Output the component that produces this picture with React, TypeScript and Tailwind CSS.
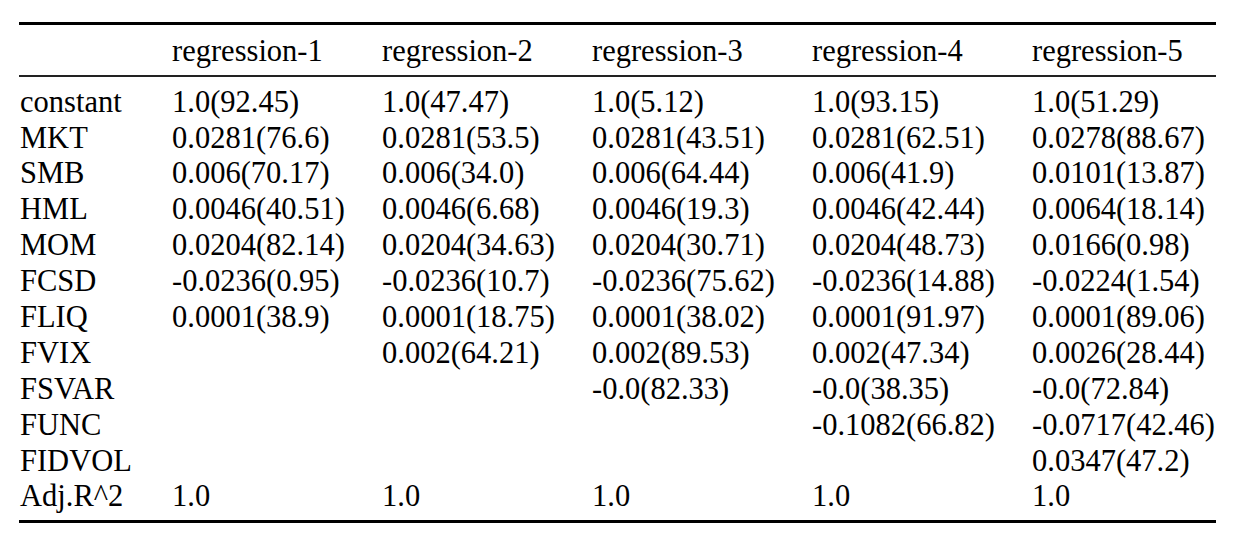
import React from 'react';

// regression results table (booktabs style)
const headers = ['regression-1', 'regression-2', 'regression-3', 'regression-4', 'regression-5'];

const rows: { name: string; cells: string[] }[] = [
  { name: 'constant', cells: ['1.0(92.45)', '1.0(47.47)', '1.0(5.12)', '1.0(93.15)', '1.0(51.29)'] },
  { name: 'MKT', cells: ['0.0281(76.6)', '0.0281(53.5)', '0.0281(43.51)', '0.0281(62.51)', '0.0278(88.67)'] },
  { name: 'SMB', cells: ['0.006(70.17)', '0.006(34.0)', '0.006(64.44)', '0.006(41.9)', '0.0101(13.87)'] },
  { name: 'HML', cells: ['0.0046(40.51)', '0.0046(6.68)', '0.0046(19.3)', '0.0046(42.44)', '0.0064(18.14)'] },
  { name: 'MOM', cells: ['0.0204(82.14)', '0.0204(34.63)', '0.0204(30.71)', '0.0204(48.73)', '0.0166(0.98)'] },
  { name: 'FCSD', cells: ['-0.0236(0.95)', '-0.0236(10.7)', '-0.0236(75.62)', '-0.0236(14.88)', '-0.0224(1.54)'] },
  { name: 'FLIQ', cells: ['0.0001(38.9)', '0.0001(18.75)', '0.0001(38.02)', '0.0001(91.97)', '0.0001(89.06)'] },
  { name: 'FVIX', cells: ['', '0.002(64.21)', '0.002(89.53)', '0.002(47.34)', '0.0026(28.44)'] },
  { name: 'FSVAR', cells: ['', '', '-0.0(82.33)', '-0.0(38.35)', '-0.0(72.84)'] },
  { name: 'FUNC', cells: ['', '', '', '-0.1082(66.82)', '-0.0717(42.46)'] },
  { name: 'FIDVOL', cells: ['', '', '', '', '0.0347(47.2)'] },
  { name: 'Adj.R^2', cells: ['1.0', '1.0', '1.0', '1.0', '1.0'] },
];

const cols = 'grid grid-cols-[152px_210px_210px_220px_220px_184px]';

export default function App() {
  return (
    <div className="w-[1244px] h-[543px] bg-white pt-[22px] pl-[19px] text-[30.5px] text-black [font-family:'Liberation_Serif','Times_New_Roman',serif]">
      <div className="w-[1197px]">
        <div className="h-[3px] bg-black" />
        <div className={`${cols} h-[50px] items-center pl-[1px]`}>
          <div />
          {headers.map((h) => (
            <div key={h} className="leading-none pt-[3px]">{h}</div>
          ))}
        </div>
        <div className="h-[2px] bg-[#222]" />
        <div className="pt-[7px] pb-[5px]">
          {rows.map((r) => (
            <div key={r.name} className={`${cols} h-[35.9px] items-center pl-[1px]`}>
              <div className="leading-none whitespace-nowrap">{r.name}</div>
              {r.cells.map((c, i) => (
                <div key={i} className="leading-none whitespace-nowrap">{c}</div>
              ))}
            </div>
          ))}
        </div>
        <div className="h-[3px] bg-black" />
      </div>
    </div>
  );
}
